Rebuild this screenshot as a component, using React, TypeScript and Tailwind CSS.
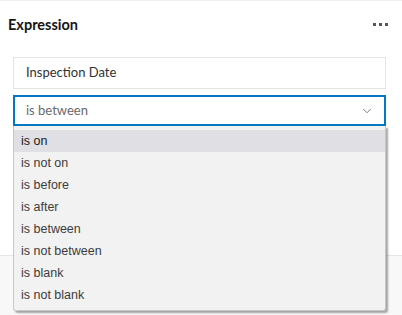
import { ChevronDown } from 'lucide-react'

const options = [
  'is on',
  'is not on',
  'is before',
  'is after',
  'is between',
  'is not between',
  'is blank',
  'is not blank',
]

export default function App() {
  return (
    <div className="relative h-[315px] w-[402px] overflow-hidden bg-white" style={{ fontFamily: 'Lato, "Open Sans", sans-serif' }}>
      <div className="h-px bg-[#f0f0f0]" />
      {/* Header */}
      <div className="flex h-[47px] items-center justify-between pl-2 pr-[14px]">
        <h2 className="text-[14.5px] font-bold text-[#151515]">Expression</h2>
        <div className="flex items-center gap-[3px]">
          <span className="h-[3px] w-[3px] bg-[#555]" />
          <span className="h-[3px] w-[3px] bg-[#555]" />
          <span className="h-[3px] w-[3px] bg-[#555]" />
        </div>
      </div>

      <div className="pl-[13px] pr-[16px] pt-[9px]">
        <div className="flex h-[32px] items-center border border-[#e4e4e4] px-3 text-[13px] text-[#323232]">
          Inspection Date
        </div>
        <div className="mt-[6px] flex h-[31px] items-center justify-between border-2 border-[#0079c1] pl-[11px] pr-[10px] text-[13px] text-[#6a6a6a]">
          <span>is between</span>
          <ChevronDown size={14} strokeWidth={1.5} className="text-[#6a6a6a]" />
        </div>
      </div>

      {/* footer strip */}
      <div className="absolute inset-x-0 bottom-0 top-[255px] border-t border-[#e6e6e6] bg-[#f8f8f8]" />

      {/* Dropdown list */}
      <ul
        className="absolute left-[13px] top-[126px] w-[373px] rounded-b-[3px] border border-t-0 border-[#c8c8c8] bg-[#f2f2f2] pb-1 pt-1 shadow-[2px_2px_2px_rgba(0,0,0,0.35)]"
        style={{ fontFamily: '"Liberation Sans", Arial, sans-serif' }}
      >
        {options.map((o, i) => (
          <li
            key={o}
            className={
              i === 0
                ? 'flex h-[22px] items-center bg-[#e0dfe4] pl-[7px] text-[12.5px] text-[#1a1a1a]'
                : 'flex h-[22px] items-center pl-[7px] text-[12.5px] text-[#3c3c3c]'
            }
          >
            {o}
          </li>
        ))}
      </ul>
    </div>
  )
}
